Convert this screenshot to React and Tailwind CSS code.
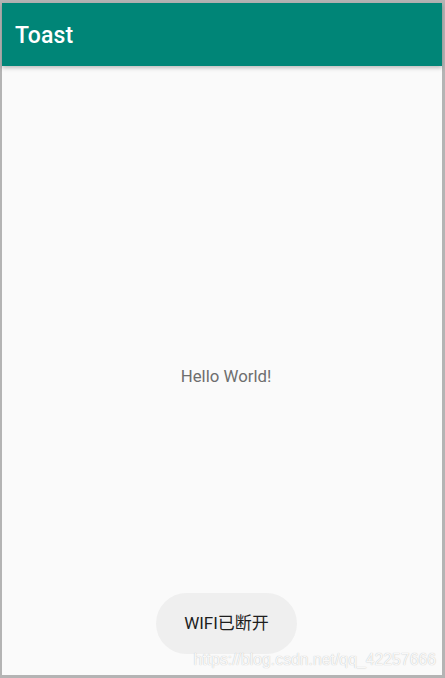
import React from 'react';

export default function App() {
    return (
        <div className="h-[678px] w-[445px] bg-[#b4b4b4] pt-[3px] pl-[2px] pr-[3px] pb-[3px] overflow-hidden" style={{ fontFamily: 'Roboto, "Noto Sans CJK SC", sans-serif' }}>
            <div className="h-full flex flex-col bg-[#fafafa] relative">
                {/* App bar */}
                <div className="h-[63px] shrink-0 bg-[#008577] flex items-center pl-[13px] pt-[3px] shadow-[0_2px_4px_rgba(0,0,0,0.25)] z-10">
                    <span className="text-white text-[23px] font-medium tracking-[0.2px]">Toast</span>
                </div>

                {/* Content */}
                <div className="flex-1 flex items-center justify-center pt-[12px] pl-[8px]">
                    <span className="text-[#6e6e6e] text-[16.8px]">Hello World!</span>
                </div>

                {/* Toast */}
                <div className="absolute left-[154px] bottom-[21px] h-[61px] w-[141px] rounded-full bg-[#efefef] flex items-center justify-center">
                    <span className="text-[#1e1e1e] text-[17px]">WIFI已断开</span>
                </div>

                {/* Watermark */}
                <span className="absolute right-[6px] bottom-[3px] text-[15.8px] text-white/90 [text-shadow:0_0_1px_rgba(0,0,0,0.3)]" style={{ fontFamily: '"Liberation Sans", sans-serif' }}>
                    https://blog.csdn.net/qq_42257666
                </span>
            </div>
        </div>
    );
}
